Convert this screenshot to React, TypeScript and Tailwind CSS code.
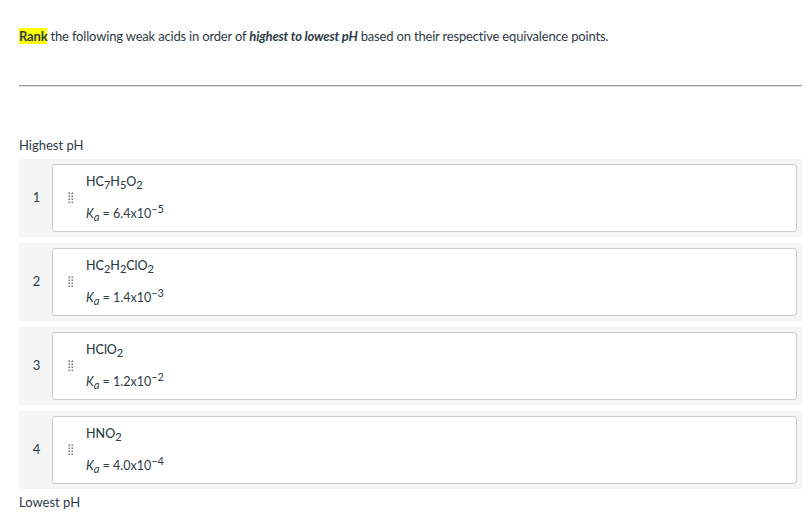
import React from "react";

const items = [
  { n: 1, formula: <>HC<sub>7</sub>H<sub>5</sub>O<sub>2</sub></>, ka: "6.4x10", exp: "−5" },
  { n: 2, formula: <>HC<sub>2</sub>H<sub>2</sub>ClO<sub>2</sub></>, ka: "1.4x10", exp: "−3" },
  { n: 3, formula: <>HClO<sub>2</sub></>, ka: "1.2x10", exp: "−2" },
  { n: 4, formula: <>HNO<sub>2</sub></>, ka: "4.0x10", exp: "−4" },
];

function Handle() {
  return (
    <svg width="6" height="12" viewBox="0 0 6 12" className="shrink-0">
      {[0, 1, 2, 3].map((r) =>
        [0, 1].map((c) => (
          <rect key={`${r}-${c}`} x={c * 3 + 0.5} y={r * 3 + 0.5} width="1.5" height="1.5" fill="#6b7780" />
        ))
      )}
    </svg>
  );
}

export default function App() {
  return (
    <div
      className="w-[805px] h-[525px] bg-white text-[#2d3b45] overflow-hidden"
      style={{ fontFamily: "Lato, 'Noto Sans', sans-serif" }}
    >
      <div className="pl-[19px] pr-[3px] pt-[27px]">
        <p className="text-[13px] leading-[18px] tracking-[-0.18px]">
          <span className="bg-[#ffff00] font-bold">Rank</span> the following weak acids in order of{" "}
          <b><i>highest to lowest pH</i></b> based on their respective equivalence points.
        </p>
        <div className="mt-[40px] h-[2px] border-t border-[#9b9b9b] border-b border-b-[#e0e0e0]" />
        <div className="mt-[50px] text-[13px] leading-[16px]">Highest pH</div>
        <div className="mt-[6px] flex flex-col gap-[6px]">
          {items.map((it) => (
            <div key={it.n} className="flex items-center bg-[#f5f5f5] h-[78px] pr-[5px]">
              <div className="w-[33px] text-center text-[13px] pl-[2px]">{it.n}</div>
              <div className="flex-1 h-[68px] bg-white border border-[#c7cdd1] rounded-[3px] flex items-center pl-[15px]">
                <Handle />
                <div className="ml-[12px] flex flex-col gap-[12px] text-[12.5px] leading-[20px]">
                  <div className="font-medium [&_sub]:text-[11px] [&_sub]:leading-none">{it.formula}</div>
                  <div>
                    <i>K<sub className="text-[11px] leading-none">a</sub></i> = {it.ka}
                    <sup className="text-[11px] leading-none">{it.exp}</sup>
                  </div>
                </div>
              </div>
            </div>
          ))}
        </div>
        <div className="mt-[5px] text-[13px] leading-[16px]">Lowest pH</div>
      </div>
    </div>
  );
}
